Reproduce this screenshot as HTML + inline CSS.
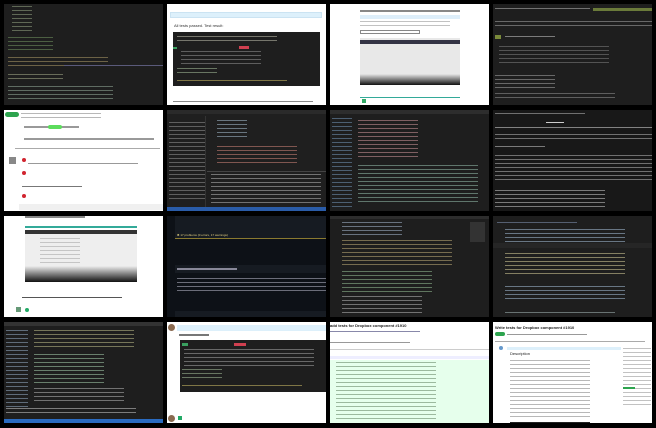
<!DOCTYPE html>
<html><head><meta charset="utf-8"><style>
*{margin:0;padding:0;box-sizing:border-box}
body{width:656px;height:428px;background:#000;position:relative;overflow:hidden;font-family:"Liberation Sans",sans-serif}
.t{position:absolute;width:159px;height:101px;overflow:hidden}
.a{position:absolute}
.code{position:absolute;opacity:.6;background:repeating-linear-gradient(to bottom,var(--c) 0 1px,transparent 1px 4px)}
.txt{position:absolute;font-size:3px;white-space:nowrap;line-height:4px}
</style></head><body>

<div class="t" style="left:4px;top:4px;background:#1e1e1e">
 <div class="code" style="--c:#8a9a7a;left:8px;top:2px;width:20px;height:28px"></div>
 <div class="code" style="--c:#6a8a5a;left:4px;top:33px;width:45px;height:16px"></div>
 <div class="code" style="--c:#a09060;left:4px;top:53px;width:100px;height:12px"></div>
 <div class="a" style="left:60px;top:61px;width:99px;height:1px;background:#5a5a7a"></div>
 <div class="code" style="--c:#9aa080;left:4px;top:70px;width:55px;height:8px"></div>
 <div class="code" style="--c:#8aa090;left:4px;top:82px;width:105px;height:16px"></div>
</div>
<div class="t" style="left:167px;top:4px;background:#fff">
 <div class="a" style="left:3px;top:8px;width:152px;height:6px;background:#ddf0fb;border:1px solid #cbe3f2"></div>
 <div class="txt" style="left:7px;top:20px;font-size:4px;color:#333">All tests passed. Test result:</div>
 <div class="a" style="left:6px;top:28px;width:147px;height:54px;background:#1e1e1e"></div>
 <div class="code" style="--c:#b0b0a0;left:10px;top:32px;width:100px;height:8px"></div>
 <div class="a" style="left:6px;top:43px;width:4px;height:2px;background:#3aa060"></div>
 <div class="a" style="left:72px;top:42px;width:10px;height:3px;background:#d04050"></div>
 <div class="code" style="--c:#888;left:14px;top:47px;width:80px;height:16px"></div>
 <div class="code" style="--c:#9ab090;left:10px;top:64px;width:40px;height:8px"></div>
 <div class="code" style="--c:#c0b060;left:10px;top:76px;width:110px;height:2px"></div>
 <div class="a" style="left:6px;top:97px;width:140px;height:1px;background:#888"></div>
</div>
<div class="t" style="left:330px;top:4px;background:#fff">
 <div class="a" style="left:30px;top:6px;width:100px;height:2px;background:#888"></div>
 <div class="a" style="left:30px;top:11px;width:100px;height:4px;background:#ddeefa"></div>
 <div class="code" style="--c:#999;left:30px;top:17px;width:90px;height:8px"></div>
 <div class="a" style="left:30px;top:26px;width:60px;height:4px;border:1px solid #888"></div>
 <div class="a" style="left:30px;top:34px;width:100px;height:47px;background:#e8e8e8"></div>
 <div class="a" style="left:30px;top:36px;width:100px;height:4px;background:#334"></div>
 <div class="a" style="left:30px;top:70px;width:100px;height:11px;background:linear-gradient(#e8e8e8,#111)"></div>
 <div class="a" style="left:30px;top:93px;width:100px;height:1px;background:#3a9"></div>
 <div class="a" style="left:32px;top:95px;width:4px;height:4px;background:#3a6"></div>
</div>
<div class="t" style="left:493px;top:4px;background:#1e1e1e">
 <div class="code" style="--c:#aaa;left:2px;top:4px;width:95px;height:2px"></div>
 <div class="a" style="left:100px;top:4px;width:59px;height:3px;background:#6a7a3a"></div>
 <div class="code" style="--c:#999;left:2px;top:17px;width:157px;height:6px"></div>
 <div class="a" style="left:2px;top:31px;width:6px;height:4px;background:#7a8a3a"></div>
 <div class="code" style="--c:#bbb;left:12px;top:32px;width:50px;height:4px"></div>
 <div class="code" style="--c:#777;left:6px;top:42px;width:110px;height:20px"></div>
 <div class="code" style="--c:#9a9a9a;left:2px;top:71px;width:60px;height:16px"></div>
 <div class="code" style="--c:#888;left:2px;top:89px;width:120px;height:8px"></div>
</div>

<div class="t" style="left:4px;top:110px;background:#fff">
 <div class="a" style="left:1px;top:2px;width:14px;height:5px;border-radius:3px;background:#2da44e"></div>
 <div class="code" style="--c:#888;left:17px;top:3px;width:80px;height:5px"></div>
 <div class="a" style="left:20px;top:16px;width:55px;height:2px;background:#999"></div>
 <div class="a" style="left:44px;top:15px;width:14px;height:4px;border-radius:2px;background:#5cdc5c"></div>
 <div class="a" style="left:20px;top:28px;width:130px;height:2px;background:#999"></div>
 <div class="a" style="left:11px;top:38px;width:145px;height:1px;background:#aaa"></div>
 <div class="a" style="left:5px;top:47px;width:7px;height:7px;background:#888"></div>
 <div class="a" style="left:18px;top:48px;width:4px;height:4px;border-radius:50%;background:#d1242f"></div>
 <div class="a" style="left:24px;top:53px;width:110px;height:1px;background:#999"></div>
 <div class="a" style="left:18px;top:61px;width:4px;height:4px;border-radius:50%;background:#d1242f"></div>
 <div class="a" style="left:18px;top:76px;width:60px;height:1px;background:#777"></div>
 <div class="a" style="left:18px;top:84px;width:4px;height:4px;border-radius:50%;background:#d1242f"></div>
 <div class="a" style="left:15px;top:94px;width:144px;height:6px;background:#f0f0f0"></div>
</div>
<div class="t" style="left:167px;top:110px;background:#1f1f1f">
 <div class="a" style="left:0;top:0;width:159px;height:4px;background:#2a2a2a"></div>
 <div class="code" style="--c:#8a8a8a;left:2px;top:12px;width:36px;height:80px"></div>
 <div class="a" style="left:38px;top:6px;width:1px;height:95px;background:#333"></div>
 <div class="code" style="--c:#9ab0c0;left:50px;top:10px;width:30px;height:20px"></div>
 <div class="code" style="--c:#c07a70;left:50px;top:36px;width:80px;height:20px"></div>
 <div class="a" style="left:40px;top:61px;width:119px;height:1px;background:#444"></div>
 <div class="code" style="--c:#aaa;left:44px;top:64px;width:110px;height:30px"></div>
 <div class="a" style="left:0;top:97px;width:159px;height:4px;background:#2a5ca8"></div>
</div>
<div class="t" style="left:330px;top:110px;background:#1e1e1e">
 <div class="a" style="left:0;top:0;width:159px;height:4px;background:#2d2d2d"></div>
 <div class="code" style="--c:#6a8aaa;left:2px;top:8px;width:20px;height:90px"></div>
 <div class="code" style="--c:#c08a90;left:28px;top:10px;width:60px;height:40px"></div>
 <div class="code" style="--c:#8ab0a0;left:28px;top:55px;width:120px;height:40px"></div>
</div>
<div class="t" style="left:493px;top:110px;background:#181818">
 <div class="a" style="left:53px;top:12px;width:18px;height:1px;background:#ccc"></div>
 <div class="code" style="--c:#aaa;left:2px;top:3px;width:90px;height:2px"></div>
 <div class="code" style="--c:#c8c8c8;left:2px;top:17px;width:157px;height:2px"></div>
 <div class="code" style="--c:#aaa;left:2px;top:24px;width:157px;height:6px"></div>
 <div class="code" style="--c:#bbb;left:2px;top:36px;width:50px;height:2px"></div>
 <div class="code" style="--c:#aaa;left:2px;top:45px;width:157px;height:28px"></div>
 <div class="code" style="--c:#bbb;left:2px;top:80px;width:110px;height:20px"></div>
</div>

<div class="t" style="left:4px;top:216px;background:#fff">
 <div class="a" style="left:21px;top:0;width:60px;height:2px;background:#888"></div>
 <div class="a" style="left:21px;top:10px;width:112px;height:2px;background:#3a9"></div>
 <div class="a" style="left:21px;top:14px;width:112px;height:4px;background:#333"></div>
 <div class="a" style="left:21px;top:18px;width:112px;height:47px;background:#eee"></div>
 <div class="code" style="--c:#aaa;left:36px;top:22px;width:40px;height:40px"></div>
 <div class="a" style="left:21px;top:50px;width:112px;height:16px;background:linear-gradient(#eee,#111)"></div>
 <div class="a" style="left:18px;top:78px;width:100px;height:4px;border-bottom:1px solid #555"></div>
 <div class="a" style="left:12px;top:91px;width:5px;height:5px;background:#697"></div>
 <div class="a" style="left:21px;top:92px;width:4px;height:4px;border-radius:50%;background:#2a6"></div>
</div>
<div class="t" style="left:167px;top:216px;background:#0d1117">
 <div class="a" style="left:8px;top:0;width:151px;height:22px;background:#161b22"></div>
 <div class="a" style="left:8px;top:22px;width:151px;height:1px;background:#8a7a30"></div>
 <div class="txt" style="left:10px;top:17px;color:#e3d080">✖ 17 problems (0 errors, 17 warnings)</div>
 <div class="a" style="left:8px;top:49px;width:151px;height:8px;background:#161b22"></div>
 <div class="a" style="left:10px;top:52px;width:60px;height:2px;background:#889"></div>
 <div class="code" style="--c:#aab;left:10px;top:62px;width:149px;height:16px"></div>
 <div class="a" style="left:8px;top:95px;width:151px;height:6px;background:#161b22"></div>
</div>
<div class="t" style="left:330px;top:216px;background:#1e1e1e">
 <div class="a" style="left:0;top:0;width:159px;height:3px;background:#2d2d2d"></div>
 <div class="code" style="--c:#9aaac0;left:12px;top:6px;width:60px;height:14px"></div>
 <div class="code" style="--c:#b0a070;left:12px;top:24px;width:110px;height:26px"></div>
 <div class="code" style="--c:#8ab08a;left:12px;top:55px;width:90px;height:22px"></div>
 <div class="code" style="--c:#aaa;left:12px;top:80px;width:80px;height:18px"></div>
 <div class="a" style="left:140px;top:6px;width:15px;height:20px;background:#333"></div>
</div>
<div class="t" style="left:493px;top:216px;background:#1e1e1e">
 <div class="code" style="--c:#7a8aa8;left:4px;top:6px;width:80px;height:2px"></div>
 <div class="code" style="--c:#9ab0c8;left:12px;top:13px;width:120px;height:14px"></div>
 <div class="a" style="left:0;top:27px;width:159px;height:5px;background:#262626"></div>
 <div class="code" style="--c:#c8c090;left:12px;top:37px;width:120px;height:24px"></div>
 <div class="code" style="--c:#9ab0c8;left:12px;top:70px;width:120px;height:16px"></div>
 <div class="code" style="--c:#9aa;left:12px;top:96px;width:110px;height:2px"></div>
</div>

<div class="t" style="left:4px;top:322px;background:#1e1e1e">
 <div class="a" style="left:0;top:0;width:159px;height:4px;background:#333"></div>
 <div class="code" style="--c:#8aa0b8;left:2px;top:8px;width:22px;height:80px"></div>
 <div class="code" style="--c:#b0b080;left:30px;top:8px;width:100px;height:20px"></div>
 <div class="code" style="--c:#9ac0a0;left:30px;top:32px;width:70px;height:30px"></div>
 <div class="code" style="--c:#aaa;left:30px;top:66px;width:90px;height:14px"></div>
 <div class="code" style="--c:#bbb;left:2px;top:86px;width:130px;height:8px"></div>
 <div class="a" style="left:0;top:97px;width:159px;height:4px;background:#2a6bc0"></div>
</div>
<div class="t" style="left:167px;top:322px;background:#fff">
 <div class="a" style="left:1px;top:2px;width:7px;height:7px;border-radius:50%;background:#8a6a50"></div>
 <div class="a" style="left:10px;top:3px;width:149px;height:6px;background:#ddf0fb"></div>
 <div class="a" style="left:12px;top:12px;width:30px;height:2px;background:#777"></div>
 <div class="a" style="left:13px;top:18px;width:146px;height:52px;background:#1e1e1e"></div>
 <div class="a" style="left:15px;top:21px;width:6px;height:3px;background:#3aa060"></div>
 <div class="a" style="left:67px;top:21px;width:12px;height:3px;background:#d04050"></div>
 <div class="code" style="--c:#999;left:17px;top:27px;width:130px;height:18px"></div>
 <div class="code" style="--c:#9ab090;left:15px;top:47px;width:40px;height:10px"></div>
 <div class="code" style="--c:#c0b060;left:15px;top:63px;width:120px;height:2px"></div>
 <div class="a" style="left:1px;top:93px;width:7px;height:7px;border-radius:50%;background:#8a6a50"></div>
 <div class="a" style="left:11px;top:94px;width:4px;height:4px;background:#2a6"></div>
</div>
<div class="t" style="left:330px;top:322px;background:#fff">
 <div class="txt" style="left:0;top:2px;font-size:4px;color:#222;font-weight:bold">add tests for Dropbox component #1910</div>
 <div class="a" style="left:0;top:9px;width:90px;height:1px;background:#88a"></div>
 <div class="a" style="left:0;top:20px;width:80px;height:1px;background:#999"></div>
 <div class="a" style="left:0;top:27px;width:159px;height:1px;background:#ccc"></div>
 <div class="a" style="left:0;top:34px;width:159px;height:3px;background:#eef"></div>
 <div class="a" style="left:0;top:38px;width:159px;height:63px;background:#e6ffec"></div>
 <div class="code" style="--c:#6a8a6a;left:6px;top:40px;width:100px;height:58px"></div>
</div>
<div class="t" style="left:493px;top:322px;background:#fff">
 <div class="txt" style="left:2px;top:4px;font-size:4px;color:#222;font-weight:bold">Write tests for Dropbox component #1910</div>
 <div class="a" style="left:2px;top:10px;width:10px;height:4px;border-radius:2px;background:#2da44e"></div>
 <div class="a" style="left:14px;top:12px;width:80px;height:1px;background:#999"></div>
 <div class="a" style="left:2px;top:19px;width:150px;height:1px;background:#aaa"></div>
 <div class="a" style="left:6px;top:24px;width:4px;height:4px;border-radius:50%;background:#69c"></div>
 <div class="a" style="left:14px;top:25px;width:114px;height:3px;background:#ddf0fb"></div>
 <div class="txt" style="left:17px;top:30px;font-size:4px;color:#222">Description</div>
 <div class="code" style="--c:#888;left:17px;top:38px;width:80px;height:60px"></div>
 <div class="a" style="left:17px;top:100px;width:80px;height:1px;background:#222"></div>
 <div class="code" style="--c:#999;left:130px;top:26px;width:28px;height:60px"></div>
 <div class="a" style="left:130px;top:65px;width:12px;height:2px;background:#2da44e"></div>
</div>
</body></html>
